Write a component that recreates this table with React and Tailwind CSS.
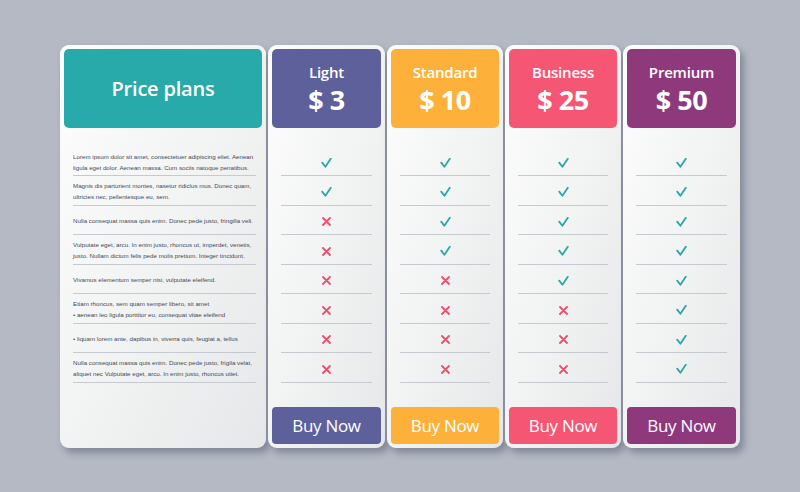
import React from "react";

const features = [
  ["Lorem ipsum dolor sit amet, consectetuer adipiscing eliet. Aenean", "ligula eget dolor. Aenean massa. Cum sociis natoque penatibus."],
  ["Magnis dis parturient montes, nasetur ridiclus mus. Donec quam,", "ultricies nec, pellentesque eu, sem."],
  ["Nulla consequat massa quis enim. Donec pede justo, fringilla veli."],
  ["Vulputate eget, arcu. In enim justo, rhoncus ut, imperdet, venetis,", "justo. Nullam dictum felis pede molis pretium. Integer tincidunt."],
  ["Vivamus elementum semper nisi, vulputate eleifend."],
  ["Etiam rhoncus, sem quam semper libero, sit amet", "• aenean leo ligula porttitor eu, consequat vitae eleifend"],
  ["• liquam lorem ante, dapibus in, viverra quis, feugiat a, tellus"],
  ["Nulla consequat massa quis enim. Donec pede justo, frigila velat,", "aliquet nec Vulputate eget, arcu. In enim justo, rhoncus utiet."],
];

const plans = [
  { name: "Light", price: "$ 3", bg: "bg-[#5e609c]", w: "w-[117px]", yes: 2 },
  { name: "Standard", price: "$ 10", bg: "bg-[#fdb03a]", w: "w-[116px]", yes: 4 },
  { name: "Business", price: "$ 25", bg: "bg-[#f45673]", w: "w-[116px]", yes: 5 },
  { name: "Premium", price: "$ 50", bg: "bg-[#8f397d]", w: "w-[117px]", yes: 8 },
];

function Check() {
  return (
    <svg width="11" height="10" viewBox="0 0 11 10" fill="none">
      <path d="M1.2 4.6 L4.4 8.8 L9.8 0.8" stroke="#2aa7a5" strokeWidth="1.8" strokeLinecap="round" strokeLinejoin="round" />
    </svg>
  );
}

function Cross() {
  return (
    <svg width="9" height="9" viewBox="0 0 9 9" fill="none">
      <path d="M1 1 L8 8 M8 1 L1 8" stroke="#e9506d" strokeWidth="1.8" strokeLinecap="round" />
    </svg>
  );
}

const cardCls =
  "h-[403px] rounded-[9px] p-[4px] flex flex-col bg-gradient-to-br from-[#fdfdfd] via-[#f2f3f3] to-[#e6e7e8] shadow-[4px_5px_7px_rgba(70,78,100,0.45)]";

export default function App() {
  return (
    <div className="w-[800px] h-[492px] bg-[#b4b9c4] pl-[60px] pt-[45px] flex gap-[2px] font-['Open_Sans',sans-serif] overflow-hidden">
      {/* feature column */}
      <div className={`w-[206px] ${cardCls}`}>
        <div className="h-[79px] rounded-[5px] bg-[#27aaa9] flex items-center justify-center text-white text-[20px] font-semibold tracking-[-0.2px]">
          Price plans
        </div>
        <div className="mt-[18.5px] pl-[9px] pr-[6px]">
          {features.map((lines, i) => (
            <div
              key={i}
              className="h-[29.5px] border-b border-[#c6cad0] flex flex-col justify-center pt-[2px] text-[6.2px] leading-[11px] text-[#454a58] font-['Liberation_Sans',sans-serif] whitespace-nowrap"
            >
              {lines.map((l, j) => (
                <div key={j}>{l}</div>
              ))}
            </div>
          ))}
        </div>
      </div>

      {plans.map((p) => (
        <div key={p.name} className={`${p.w} ${cardCls}`}>
          <div className={`h-[79px] rounded-[5px] ${p.bg} flex flex-col items-center justify-center text-white`}>
            <div className="text-[15px] leading-[17px] font-semibold tracking-[-0.2px]">{p.name}</div>
            <div className="text-[27px] leading-[28px] font-bold mt-[5px] tracking-[-0.5px]">{p.price}</div>
          </div>
          <div className="mt-[18.5px] px-[9px]">
            {features.map((_, i) => (
              <div key={i} className="h-[29.5px] border-b border-[#c6cad0] flex items-center justify-center pt-[4px]">
                {i < p.yes ? <Check /> : <Cross />}
              </div>
            ))}
          </div>
          <button className={`mt-auto h-[37px] rounded-[4px] ${p.bg} text-white text-[17px] leading-none tracking-[-0.3px]`}>
            Buy Now
          </button>
        </div>
      ))}
    </div>
  );
}
